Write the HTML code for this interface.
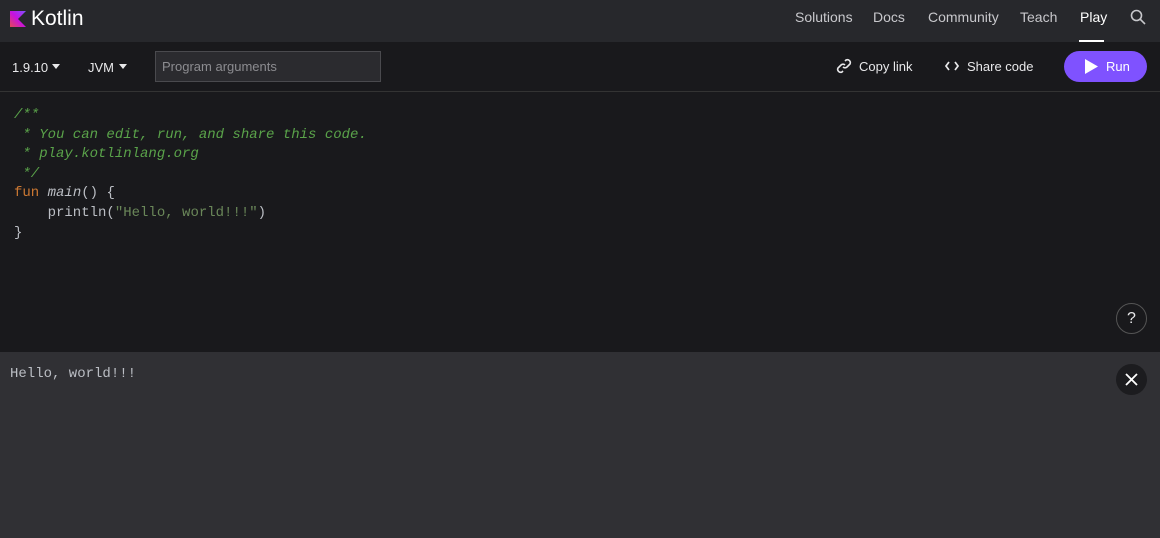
<!DOCTYPE html>
<html><head><meta charset="utf-8"><style>
*{margin:0;padding:0;box-sizing:border-box}
body{width:1160px;height:538px;background:#303034;font-family:"Liberation Sans",sans-serif;overflow:hidden;position:relative}
.hdr{position:absolute;left:0;top:0;width:1160px;height:42px;background:#27282c}
.logo{position:absolute;left:10px;top:7px;color:#fff;font-size:21px;display:flex;align-items:center}
.nav{position:absolute;top:9px;font-size:14px;color:#c8c8cc}
.tb{position:absolute;left:0;top:42px;width:1160px;height:50px;background:#19191c;border-bottom:1px solid #333}
.ed{position:absolute;left:0;top:92px;width:1160px;height:260px;background:#19191c}
pre{position:absolute;left:14px;top:106px;font-family:"Liberation Mono",monospace;font-size:14px;line-height:19.6px;color:#bbbec4}
.c{color:#5aa34a;font-style:italic}.k{color:#cc7832}.s{color:#6a8759}.i{font-style:italic}
.t{position:absolute;font-size:13px;color:#e8e8ea}
</style></head><body>
<div class="hdr">
<div class="logo"><svg width="16" height="16" viewBox="0 0 16 16"><defs><linearGradient id="g" x1="0" y1="1" x2="1" y2="0"><stop offset="0" stop-color="#e44857"/><stop offset=".5" stop-color="#c711e1"/><stop offset="1" stop-color="#7f52ff"/></linearGradient></defs><path d="M0 0H16L8 8L16 16H0Z" fill="url(#g)"/></svg><span style="margin-left:5px">Kotlin</span></div>
<span class="nav" style="left:795px">Solutions</span>
<span class="nav" style="left:873px">Docs</span>
<span class="nav" style="left:928px">Community</span>
<span class="nav" style="left:1020px">Teach</span>
<span class="nav" style="left:1080px;color:#fff">Play</span>
<div style="position:absolute;left:1079px;top:40px;width:25px;height:2px;background:#fff"></div>
<svg style="position:absolute;left:1130px;top:9px" width="16" height="16" viewBox="0 0 16 16"><circle cx="6.5" cy="6.5" r="5" fill="none" stroke="#c8c8cc" stroke-width="1.6"/><path d="M10 10L15 15" stroke="#c8c8cc" stroke-width="1.6"/></svg>
</div>
<div class="tb">
<span class="t" style="left:12px;top:18px">1.9.10</span>
<span style="position:absolute;left:52px;top:22px;border:4px solid transparent;border-top:5px solid #e8e8ea"></span>
<span class="t" style="left:88px;top:18px">JVM</span>
<span style="position:absolute;left:119px;top:22px;border:4px solid transparent;border-top:5px solid #e8e8ea"></span>
<div style="position:absolute;left:155px;top:9px;width:226px;height:31px;background:#2b2b2f;border:1px solid #4a4a4e;color:#8c8c90;font-size:13px;padding:7px 6px">Program arguments</div>
<svg style="position:absolute;left:836px;top:16px" width="16" height="16" viewBox="0 0 16 16" fill="none" stroke="#e8e8ea" stroke-width="1.6"><path d="M7 9a3 3 0 0 0 4 0l3-3a3 3 0 0 0-4-4L9 3"/><path d="M9 7a3 3 0 0 0-4 0L2 10a3 3 0 0 0 4 4l1-1"/></svg>
<span class="t" style="left:859px;top:17px">Copy link</span>
<svg style="position:absolute;left:945px;top:18px" width="14" height="12" viewBox="0 0 14 12" fill="none" stroke="#e8e8ea" stroke-width="1.7"><path d="M4 2L1 6L4 10M10 2L13 6L10 10"/></svg>
<span class="t" style="left:967px;top:17px">Share code</span>
<div style="position:absolute;left:1064px;top:9px;width:83px;height:31px;border-radius:16px;background:#7f52ff"></div>
<svg style="position:absolute;left:1085px;top:17px" width="13" height="15" viewBox="0 0 13 15"><path d="M0 0L13 7.5L0 15Z" fill="#fff"/></svg>
<span class="t" style="left:1106px;top:17px;color:#fff">Run</span>
</div>
<div class="ed"></div>
<pre><span class="c">/**
 * You can edit, run, and share this code.
 * play.kotlinlang.org
 */</span>
<span class="k">fun</span> <span class="i">main</span>() {
    println(<span class="s">"Hello, world!!!"</span>)
}</pre>
<div style="position:absolute;left:1116px;top:303px;width:31px;height:31px;border-radius:50%;border:1px solid #555;color:#e8e8ea;font-size:16px;text-align:center;line-height:29px">?</div>
<div style="position:absolute;left:10px;top:366px;font-family:'Liberation Mono',monospace;font-size:14px;color:#bbbec4">Hello, world!!!</div>
<div style="position:absolute;left:1116px;top:364px;width:31px;height:31px;border-radius:50%;background:#1c1c1f"></div>
<svg style="position:absolute;left:1124px;top:372px" width="15" height="15" viewBox="0 0 15 15" stroke="#fff" stroke-width="1.8"><path d="M2 2L13 13M13 2L2 13"/></svg>
</body></html>
